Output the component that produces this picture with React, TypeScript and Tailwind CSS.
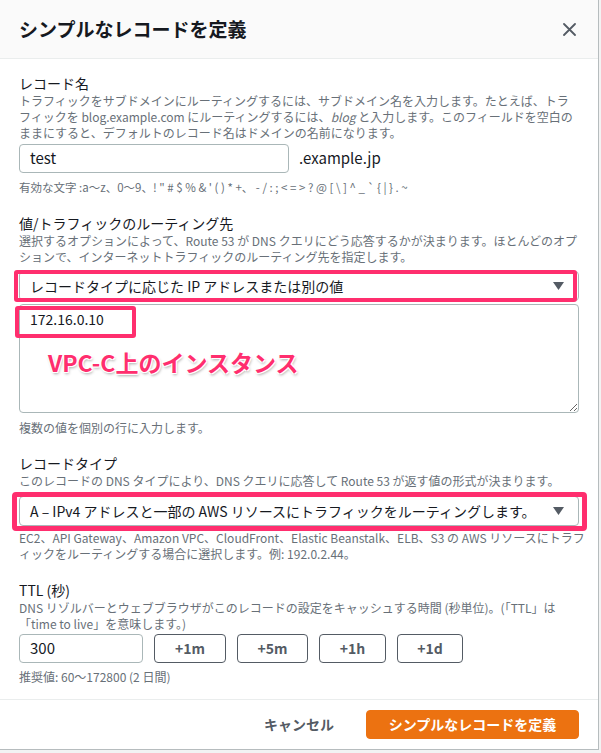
const font = { fontFamily: '"Noto Sans CJK JP", "Noto Sans", sans-serif' };

const validChars = '有効な文字 :a〜z、0〜9、! " # $ % & \' ( ) * +、 - / : ; < = > ? @ [ \\ ] ^ _ ` { | } . ~';

function Caret() {
  return (
    <svg width="11" height="8" viewBox="0 0 11 8" className="shrink-0">
      <path d="M0 0h11L5.5 8z" fill="#545b64" />
    </svg>
  );
}

function Label({ children }: { children: React.ReactNode }) {
  return <div className="text-[14px] leading-5 text-[#16191f]">{children}</div>;
}

function Desc({ lines }: { lines: React.ReactNode[] }) {
  return (
    <div className="text-[12px] leading-4 text-[#687078]">
      {lines.map((l, i) => (
        <div key={i} className="whitespace-nowrap">
          {l}
        </div>
      ))}
    </div>
  );
}

function Select({ text }: { text: string }) {
  return (
    <div className="flex h-[30px] items-center justify-between border border-[#aab7b8] rounded-sm bg-white pl-[10px] pr-[14px] text-[14px] text-[#16191f]">
      <span className="whitespace-nowrap">{text}</span>
      <Caret />
    </div>
  );
}

export default function App() {
  return (
    <div className="min-h-screen bg-[#f2f3f3]" style={font}>
      <div className="flex h-[750px] w-[599px] flex-col border-r border-b border-[#b6bcbe] bg-white">
        {/* Header */}
        <div className="flex h-[59px] shrink-0 items-center justify-between border-b border-[#eaeded] bg-[#fafafa] pl-[19px] pr-[22px]">
          <h2 className="text-[19px] font-bold text-[#16191f]">シンプルなレコードを定義</h2>
          <svg width="13" height="13" viewBox="0 0 13 13">
            <path d="M1 1l11 11M12 1L1 12" stroke="#545b64" strokeWidth="1.8" strokeLinecap="round" />
          </svg>
        </div>

        {/* Body */}
        <div className="flex-1 px-[19px] pt-[14px]">
          {/* Record name */}
          <Label>レコード名</Label>
          <Desc
            lines={[
              'トラフィックをサブドメインにルーティングするには、サブドメイン名を入力します。たとえば、トラ',
              <>
                フィックを blog.example.com にルーティングするには、<i>blog</i> と入力します。このフィールドを空白の
              </>,
              'ままにすると、デフォルトのレコード名はドメインの名前になります。',
            ]}
          />
          <div className="mt-[3px] flex items-center gap-[10px]">
            <div className="flex h-[29px] w-[270px] items-center border border-[#aab7b8] rounded-sm pl-[10px] text-[15px] text-[#16191f]">
              test
            </div>
            <span className="text-[15px] text-[#16191f]">.example.jp</span>
          </div>
          <div className="mt-[6px] whitespace-nowrap text-[11.5px] leading-4 text-[#687078]">{validChars}</div>

          {/* Value */}
          <div className="mt-[18px]">
            <Label>値/トラフィックのルーティング先</Label>
            <Desc
              lines={[
                '選択するオプションによって、Route 53 が DNS クエリにどう応答するかが決まります。ほとんどのオプ',
                'ションで、インターネットトラフィックのルーティング先を指定します。',
              ]}
            />
          </div>
          <div className="relative mt-[6px]">
            <Select text="レコードタイプに応じた IP アドレスまたは別の値" />
            <div className="absolute -left-[5px] -top-[1px] -bottom-[1px] right-[2px] rounded-[3px] border-[4px] border-[#ff2e6e]" />
          </div>
          <div className="relative mt-[3px]">
            <textarea
              readOnly
              value="172.16.0.10"
              className="block h-[109px] w-full border border-[#aab7b8] rounded-sm px-[10px] pt-[4px] text-[14px] leading-5 text-[#16191f] outline-none"
            />
            <div className="absolute -left-[4px] top-[2px] h-[32px] w-[121px] rounded-[3px] border-[4px] border-[#ff2e6e]" />
            <div className="absolute left-[29px] top-[41px] whitespace-nowrap text-[23px] font-bold text-[#ff2e6e] [text-shadow:-1px_-1px_0_#fff,1px_-1px_0_#fff,-1px_1px_0_#fff,1px_1px_0_#fff,1px_2px_3px_rgba(0,0,0,0.35)]">
              VPC-C上のインスタンス
            </div>
          </div>
          <div className="mt-[7px] text-[12px] leading-4 text-[#687078]">複数の値を個別の行に入力します。</div>

          {/* Record type */}
          <div className="mt-[17px]">
            <Label>レコードタイプ</Label>
            <Desc lines={['このレコードの DNS タイプにより、DNS クエリに応答して Route 53 が返す値の形式が決まります。']} />
          </div>
          <div className="relative mt-[7px]">
            <Select text="A – IPv4 アドレスと一部の AWS リソースにトラフィックをルーティングします。" />
            <div className="absolute -left-[7px] -top-[4px] -bottom-[5px] -right-[8px] rounded-[4px] border-[5px] border-[#ff2e6e]" />
          </div>
          <div className="mt-[4px]">
            <Desc
              lines={[
                'EC2、API Gateway、Amazon VPC、CloudFront、Elastic Beanstalk、ELB、S3 の AWS リソースにトラフ',
                'ィックをルーティングする場合に選択します。例: 192.0.2.44。',
              ]}
            />
          </div>

          {/* TTL */}
          <div className="mt-[18px]">
            <Label>TTL (秒)</Label>
            <Desc
              lines={[
                'DNS リゾルバーとウェブブラウザがこのレコードの設定をキャッシュする時間 (秒単位)。(「TTL」は',
                '「time to live」を意味します。)',
              ]}
            />
          </div>
          <div className="mt-[2px] flex items-center gap-[11px]">
            <div className="flex h-[29px] w-[124px] items-center border border-[#aab7b8] rounded-sm pl-[10px] text-[15px] text-[#16191f]">
              300
            </div>
            {[
              ['+1m', 'w-[72px]'],
              ['+5m', 'w-[71px]'],
              ['+1h', 'w-[67px]'],
              ['+1d', 'w-[66px]'],
            ].map(([t, w]) => (
              <button
                key={t}
                className={`${w} h-[29px] rounded-sm border border-[#545b64] text-[14px] font-bold text-[#545b64]`}
              >
                {t}
              </button>
            ))}
          </div>
          <div className="mt-[6px] text-[12px] leading-4 text-[#687078]">推奨値: 60〜172800 (2 日間)</div>
        </div>

        {/* Footer */}
        <div className="flex h-[50px] shrink-0 items-center justify-end gap-4 border-t border-[#eaeded] px-[19px]">
          <button className="h-[29px] px-4 text-[14px] font-bold text-[#545b64]">キャンセル</button>
          <button className="h-[29px] w-[213px] rounded-sm border border-[#ec7211] bg-[#ec7211] text-[14px] font-bold text-white">
            シンプルなレコードを定義
          </button>
        </div>
      </div>
    </div>
  );
}
